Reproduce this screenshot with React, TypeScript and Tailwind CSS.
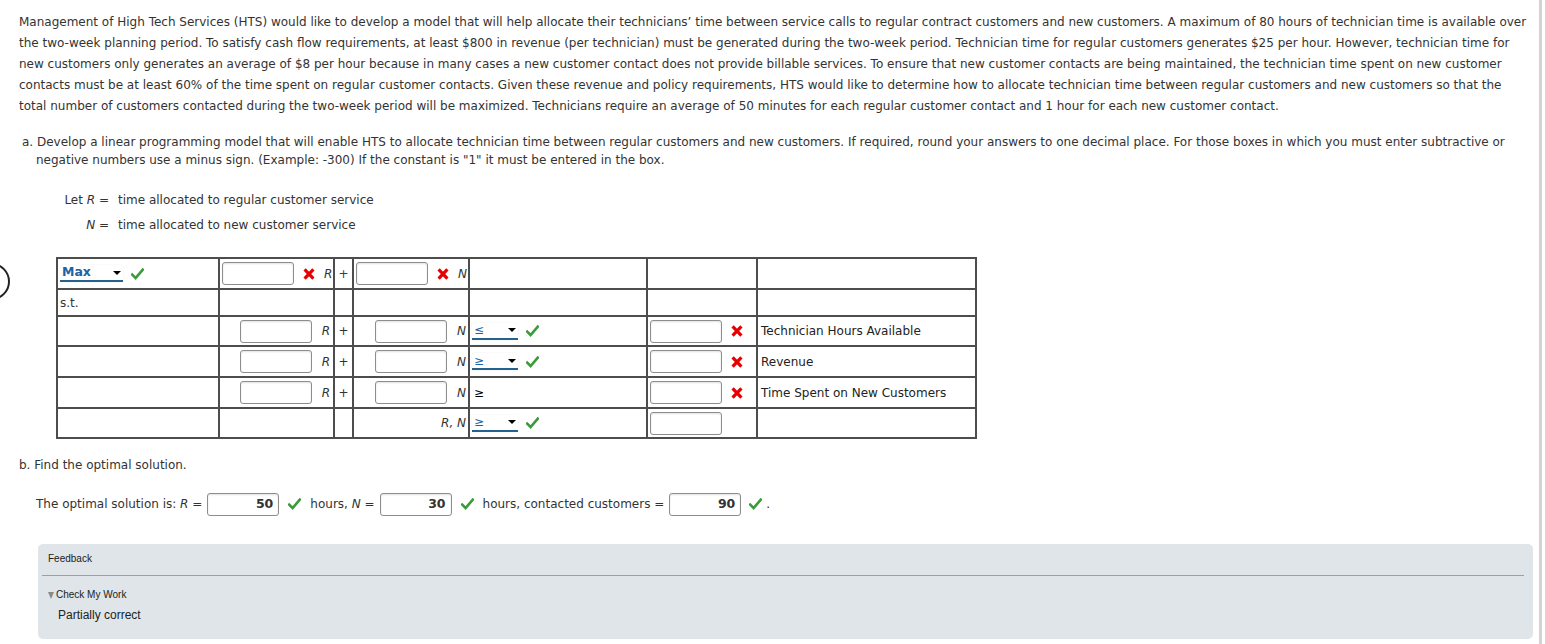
import React from 'react';

const Check = () => (
  <svg width="13" height="12" viewBox="0 0 13 12" className="inline-block shrink-0">
    <path d="M1.2 6.6 L4.6 10 L11.8 1.6" fill="none" stroke="#3a9b3a" strokeWidth="2.6" strokeLinecap="square" />
  </svg>
);

const Cross = () => (
  <svg width="12" height="12" viewBox="0 0 12 12" className="inline-block shrink-0">
    <path d="M1.6 1.4 L10.4 10.6 M10.4 1.4 L1.6 10.6" fill="none" stroke="#e60000" strokeWidth="3.2" />
  </svg>
);

const Box = ({ value, className = '' }: { value?: string; className?: string }) => (
  <span
    className={`inline-flex items-center justify-end w-[72px] h-[23px] shrink-0 bg-white border border-[#8d8d8d] rounded-[3px] shadow-[inset_0_1px_2px_rgba(0,0,0,0.12)] pr-[5px] font-bold text-[12.5px] text-[#333] ${className}`}
  >
    {value}
  </span>
);

const Pick = ({ label, wide = false }: { label: string; wide?: boolean }) => (
  <span
    className={`inline-flex items-center justify-between h-[17px] ${wide ? 'w-[63px]' : 'w-[46px]'} bg-white border-b-2 border-[#25618f] rounded-t-[3px] shadow-[0_0_2px_rgba(0,0,0,0.08)] pl-[2px] pr-[2px] text-[#1d62a5] ${wide ? 'font-bold text-[12.5px]' : 'text-[12px]'}`}
  >
    <span>{label}</span>
    <span className="w-0 h-0 border-l-[4px] border-r-[4px] border-t-[4px] border-l-transparent border-r-transparent border-t-black" />
  </span>
);

const cell = 'border-2 border-[#4d4d4d] p-0 align-middle';

export default function App() {
  return (
    <div className="relative flex min-h-[644px] overflow-hidden bg-white font-['DejaVu_Sans',Verdana,sans-serif] text-[12px] text-[#333]">
      <div className="absolute left-[-27px] top-[263px] w-[37px] h-[37px] rounded-full border-[2.5px] border-[#222]" />

      <div className="w-[1539px] pt-[12px] pl-[19px] pr-[8px]">
        <p className="leading-[21px]">
          Management of High Tech Services (HTS) would like to develop a model that will help allocate their technicians’ time between service calls to regular contract customers and new customers. A maximum of 80 hours of technician time is available over the two-week planning period. To satisfy cash flow requirements, at least $800 in revenue (per technician) must be generated during the two-week period. Technician time for regular customers generates $25 per hour. However, technician time for new customers only generates an average of $8 per hour because in many cases a new customer contact does not provide billable services. To ensure that new customer contacts are being maintained, the technician time spent on new customer contacts must be at least 60% of the time spent on regular customer contacts. Given these revenue and policy requirements, HTS would like to determine how to allocate technician time between regular customers and new customers so that the total number of customers contacted during the two-week period will be maximized. Technicians require an average of 50 minutes for each regular customer contact and 1 hour for each new customer contact.
        </p>

        <p className="mt-[16px] pl-[17px] -indent-[14px] leading-[18px]">
          a. Develop a linear programming model that will enable HTS to allocate technician time between regular customers and new customers. If required, round your answers to one decimal place. For those boxes in which you must enter subtractive or negative numbers use a minus sign. (Example: -300) If the constant is "1" it must be entered in the box.
        </p>

        <div className="mt-[19px] ml-[40px] grid grid-cols-[50px_1fr] gap-x-[9px] leading-[25px]">
          <span className="text-right">
            Let <i>R</i> =
          </span>
          <span>time allocated to regular customer service</span>
          <span className="text-right">
            <i>N</i> =
          </span>
          <span>time allocated to new customer service</span>
        </div>

        <table className="mt-[19px] ml-[37px] border-collapse table-fixed w-[919px]">
          <colgroup>
            <col className="w-[162px]" />
            <col className="w-[115px]" />
            <col className="w-[19px]" />
            <col className="w-[116px]" />
            <col className="w-[178px]" />
            <col className="w-[110px]" />
            <col className="w-[219px]" />
          </colgroup>
          <tbody>
            <tr className="h-[31px]">
              <td className={`${cell} pl-[2px]`}>
                <div className="flex items-center gap-[8px]">
                  <Pick label="Max" wide />
                  <Check />
                </div>
              </td>
              <td className={`${cell} pl-[2px]`}>
                <div className="flex items-center">
                  <Box />
                  <span className="ml-[9px] flex"><Cross /></span>
                  <i className="ml-[9px]">R</i>
                </div>
              </td>
              <td className={`${cell} text-center text-[#4b2a6e]`}>+</td>
              <td className={`${cell} pl-[2px]`}>
                <div className="flex items-center">
                  <Box />
                  <span className="ml-[9px] flex"><Cross /></span>
                  <i className="ml-[9px]">N</i>
                </div>
              </td>
              <td className={cell} />
              <td className={cell} />
              <td className={cell} />
            </tr>
            <tr className="h-[27px]">
              <td className={`${cell} pl-[2px]`}>s.t.</td>
              <td className={cell} />
              <td className={cell} />
              <td className={cell} />
              <td className={cell} />
              <td className={cell} />
              <td className={cell} />
            </tr>
            {[
              { sign: '≤', pick: true, rhsLabel: 'Technician Hours Available' },
              { sign: '≥', pick: true, rhsLabel: 'Revenue' },
              { sign: '≥', pick: false, rhsLabel: 'Time Spent on New Customers' },
            ].map((r, i) => (
              <tr key={i} className={i === 0 ? 'h-[30px]' : 'h-[31px]'}>
                <td className={cell} />
                <td className={`${cell} pr-[3px]`}>
                  <div className="flex items-center justify-end">
                    <Box />
                    <i className="ml-[10px]">R</i>
                  </div>
                </td>
                <td className={`${cell} text-center`}>+</td>
                <td className={`${cell} pr-[2px]`}>
                  <div className="flex items-center justify-end">
                    <Box />
                    <i className="ml-[10px]">N</i>
                  </div>
                </td>
                <td className={`${cell} pl-[2px]`}>
                  {r.pick ? (
                    <div className="flex items-center gap-[8px]">
                      <Pick label={r.sign} />
                      <Check />
                    </div>
                  ) : (
                    <span className="pl-[2px] text-black">{r.sign}</span>
                  )}
                </td>
                <td className={`${cell} pl-[2px]`}>
                  <div className="flex items-center">
                    <Box />
                    <span className="ml-[9px] flex"><Cross /></span>
                  </div>
                </td>
                <td className={`${cell} pl-[3px] text-[#222]`}>{r.rhsLabel}</td>
              </tr>
            ))}
            <tr className="h-[30px]">
              <td className={cell} />
              <td className={cell} />
              <td className={cell} />
              <td className={`${cell} pr-[2px] text-right`}>
                <i>R, N</i>
              </td>
              <td className={`${cell} pl-[2px]`}>
                <div className="flex items-center gap-[8px]">
                  <Pick label="≥" />
                  <Check />
                </div>
              </td>
              <td className={`${cell} pl-[2px]`}>
                <div className="flex items-center">
                  <Box />
                </div>
              </td>
              <td className={cell} />
            </tr>
          </tbody>
        </table>

        <p className="mt-[17px] leading-[18px]">b. Find the optimal solution.</p>

        <div className="mt-[18px] ml-[17px] flex items-center h-[24px]">
          <span>
            The optimal solution is: <i>R</i> =
          </span>
          <Box value="50" className="ml-[5px]" />
          <span className="ml-[9px] flex"><Check /></span>
          <span className="ml-[9px]">
            hours, <i>N</i> =
          </span>
          <Box value="30" className="ml-[5px]" />
          <span className="ml-[9px] flex"><Check /></span>
          <span className="ml-[9px]">hours, contacted customers =</span>
          <Box value="90" className="ml-[5px]" />
          <span className="ml-[8px] flex"><Check /></span>
          <span className="ml-[4px]">.</span>
        </div>

        <div className="mt-[28px] ml-[19px] mr-[-2px] rounded-[5px] bg-[#dfe5e8] pt-[9px] pb-[17px] pl-[4px] pr-[9px] font-['Liberation_Sans',Arial,sans-serif] text-[#222]">
          <div className="pl-[6px] text-[10px] leading-[12px]">Feedback</div>
          <div className="mt-[10px] border-t-[1.5px] border-[#9aa0a3]" />
          <div className="mt-[13px] pl-[6px] flex items-center text-[10px] leading-[12px]">
            <span className="mr-[2px] w-0 h-0 border-l-[3px] border-r-[3px] border-t-[7px] border-l-transparent border-r-transparent border-t-[#8a8a8a]" />
            Check My Work
          </div>
          <div className="mt-[7px] pl-[16px] text-[12px] leading-[14px]">Partially correct</div>
        </div>
      </div>

      <div className="w-[3px] bg-[#d3d3d3]" />
    </div>
  );
}
